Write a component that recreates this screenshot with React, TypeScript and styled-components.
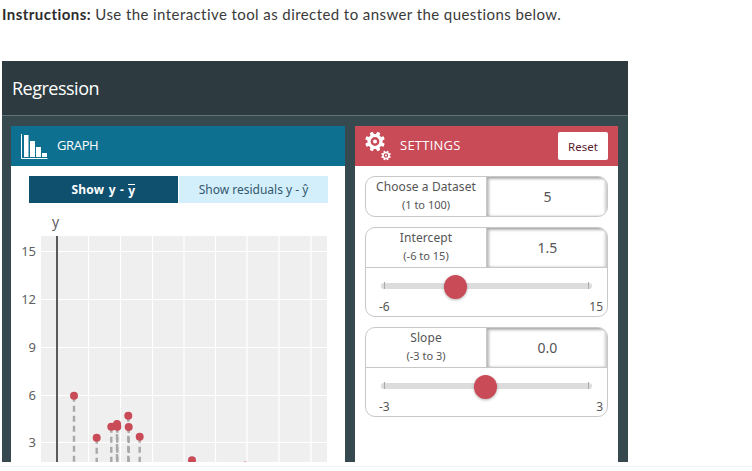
import React from "react";
import styled, { createGlobalStyle } from "styled-components";

const Global = createGlobalStyle`
  html, body { margin: 0; padding: 0; background: #fff; width: 752px; height: 471px; overflow: hidden; }
  * { box-sizing: border-box; }
`;

const Page = styled.div`
  width: 752px;
  height: 471px;
  overflow: hidden;
  display: flex;
  flex-direction: column;
  padding: 0 0 0 2px;
  font-family: "Open Sans", sans-serif;
`;

const Instructions = styled.p`
  margin: 0;
  height: 61px;
  padding-top: 4px;
  font: 15px/20px Lato, sans-serif;
  letter-spacing: 0.42px;
  color: #3a3a3a;
  b { font-weight: 700; color: #2d2d2d; letter-spacing: 0.45px; }
`;

const Panel = styled.section`
  width: 626px;
  height: 401px;
  flex: none;
  overflow: hidden;
  background: #36494e;
  display: flex;
  flex-direction: column;
`;

const PanelHeader = styled.header`
  height: 55px;
  flex: none;
  background: #2d3b40;
  border-bottom: 1px solid #5f7274;
  padding: 0 10px;
  display: flex;
  align-items: center;
  font-size: 18px;
  letter-spacing: -0.5px;
  color: #fff;
`;

const Columns = styled.div`
  flex: 1;
  min-height: 0;
  display: flex;
  gap: 10px;
  padding: 10px 10px 0 9px;
`;

const Card = styled.div<{ $w: number }>`
  width: ${(p) => p.$w}px;
  flex: none;
  background: #fff;
  display: flex;
  flex-direction: column;
  overflow: hidden;
`;

const CardHeader = styled.div<{ $bg: string }>`
  height: 40px;
  flex: none;
  background: ${(p) => p.$bg};
  color: #fff;
  display: flex;
  align-items: center;
  font-size: 13px;
`;

const CardTitle = styled.span<{ $track: number }>`
  letter-spacing: ${(p) => p.$track}px;
  padding-bottom: 2px;
`;

const IconSlot = styled.span<{ $w: number; $ml: number }>`
  width: ${(p) => p.$w}px;
  margin-left: ${(p) => p.$ml}px;
  display: flex;
  flex: none;
`;

const ResetButton = styled.button`
  margin-left: auto;
  margin-right: 10px;
  width: 50px;
  height: 28px;
  border: 0;
  border-radius: 2px;
  background: #fff;
  color: #5b2130;
  font: 11.5px "Noto Sans", sans-serif;
  padding: 0;
`;

const GraphBody = styled.div`
  padding: 10px 0 0 18px;
  display: flex;
  flex-direction: column;
`;

const Tabs = styled.div`
  display: flex;
  gap: 1px;
  width: 299px;
`;

const Tab = styled.div<{ $active?: boolean }>`
  flex: 1;
  height: 27px;
  display: flex;
  align-items: center;
  justify-content: center;
  white-space: pre;
  font: ${(p) => (p.$active ? 700 : 400)} 12px "Noto Sans", sans-serif;
  letter-spacing: ${(p) => (p.$active ? 0.2 : 0)}px;
  word-spacing: ${(p) => (p.$active ? 1 : 0)}px;
  background: ${(p) => (p.$active ? "#10506f" : "#d4effc")};
  color: ${(p) => (p.$active ? "#fff" : "#33586e")};
`;

const YBar = styled.span`
  display: inline-block;
  border-top: 1px solid currentColor;
  line-height: 11px;
  margin-top: 1px;
`;

const ChartBox = styled.div`
  margin-left: -18px;
  flex: none;
`;

const YLabel = styled.div`
  height: 27px;
  padding: 9px 0 0 41px;
  font: 14px/20px "Noto Sans", sans-serif;
  color: #5f5f5f;
`;

const PlotSvg = styled.svg`
  display: block;
`;

const SettingsBody = styled.div`
  padding: 10px 10px 0;
  display: flex;
  flex-direction: column;
  gap: 10px;
`;

const Control = styled.div`
  width: 243px;
  border: 1px solid #c8c8c8;
  border-radius: 10px;
  overflow: hidden;
  color: #555;
  font-family: "Noto Sans", sans-serif;
`;

const ControlTop = styled.div`
  height: 39px;
  display: flex;
`;

const ControlLabel = styled.div`
  width: 121px;
  flex: none;
  border-right: 1px solid #c8c8c8;
  padding-top: 1px;
  display: flex;
  flex-direction: column;
  align-items: center;
  font-size: 12px;
  line-height: 18px;
  letter-spacing: 0.1px;
  small { font-size: 11px; line-height: 18px; letter-spacing: 0; }
`;

const ValueBox = styled.div`
  flex: 1;
  display: flex;
  align-items: center;
  justify-content: center;
  padding-left: 1px;
  font-size: 14px;
  color: #555;
  box-shadow: inset 2px 2px 3px rgba(0, 0, 0, 0.28), inset -2px 0 3px rgba(0, 0, 0, 0.2);
`;

const SliderArea = styled.div`
  height: 49px;
  border-top: 1px solid #c8c8c8;
  padding: 15px 4px 0 13px;
  position: relative;
`;

const Track = styled.div`
  height: 6px;
  margin: 0 11px 0 2px;
  border-radius: 3px;
  background: #dcdcdc;
  position: relative;
`;

const Tick = styled.i<{ $side: "left" | "right" }>`
  position: absolute;
  top: -1px;
  ${(p) => p.$side}: 3px;
  width: 1px;
  height: 7px;
  background: #aaa;
`;

const Thumb = styled.div`
  position: absolute;
  top: 7px;
  width: 23px;
  height: 24px;
  border-radius: 50%;
  background: #c94b57;
  box-shadow: 0 1px 3px rgba(0, 0, 0, 0.3);
`;

const RangeLabels = styled.div`
  display: flex;
  justify-content: space-between;
  margin-top: 11px;
  font-size: 12px;
  line-height: 14px;
  color: #555;
`;

const FooterRule = styled.div`
  height: 1px;
  margin: 4px 0 0 -2px;
  width: 752px;
  flex: none;
  background: #f0f0f0;
`;

function BarsIcon() {
  return (
    <svg width="27" height="25" viewBox="0 0 27 25" fill="none">
      <path d="M0.5 0v24.5H26.5" stroke="#fff" strokeWidth="1" />
      <path d="M3 1h4.5v22H3zM9 7h5v16H9zM15 13h5v10h-5zM21 19h5v4h-5z" fill="#fff" />
    </svg>
  );
}

const gearPath = (cx: number, cy: number, r: number, teeth: number) => {
  const pts: string[] = [];
  const st = (Math.PI * 2) / teeth;
  const offset = st / 2;
  for (let i = 0; i < teeth; i++) {
    const a = i * st + offset;
    const rim = r * 0.76;
    const at = (o: number, rad: number) =>
      `${(cx + Math.cos(a + o * st) * rad).toFixed(2)} ${(cy + Math.sin(a + o * st) * rad).toFixed(2)}`;
    pts.push(`${i ? "L" : "M"}${at(-0.32, rim)}`, `L${at(-0.2, r)}`, `L${at(0.2, r)}`, `L${at(0.32, rim)}`);
  }
  const circle = (rad: number) =>
    `M${cx + rad} ${cy} A${rad} ${rad} 0 1 0 ${cx - rad} ${cy} A${rad} ${rad} 0 1 0 ${cx + rad} ${cy} Z`;
  return `${pts.join(" ")} Z ${circle(r * 0.44)} ${circle(r * 0.2)}`;
};

function GearsIcon() {
  return (
    <svg width="28" height="30" viewBox="0 0 28 30">
      <path d={gearPath(10, 10.5, 10, 8)} fill="#fff" fillRule="evenodd" />
      <path d={gearPath(21, 24.5, 5, 8)} fill="#fff" fillRule="evenodd" />
    </svg>
  );
}

const yTicks = [
  { label: "15", y: 21.5 },
  { label: "12", y: 69.5 },
  { label: "9", y: 117.5 },
  { label: "6", y: 165.5 },
  { label: "3", y: 212.5 },
];
const xGrid = [77.5, 109.5, 141.5, 173, 204.5, 236, 268, 300];
const points = [
  [63, 165.7],
  [85.7, 207.7],
  [100.3, 196.7],
  [106, 194],
  [106.3, 196.7],
  [117.3, 185.7],
  [117.7, 197],
  [128.7, 206.7],
  [181, 230.3],
  [234.3, 235.6],
];

function Plot() {
  return (
    <PlotSvg width="334" height="232" viewBox="0 0 334 232">
      <rect x="30" y="6" width="286" height="226" fill="#efefef" />
      {yTicks.map((t) => (
        <g key={t.label}>
          <line x1="30" x2="316" y1={t.y} y2={t.y} stroke="#fff" strokeWidth="1.2" />
          <text x="25" y={t.y + 4.5} textAnchor="end" fontSize="13" fill="#5f5f5f" fontFamily="'Noto Sans', sans-serif">
            {t.label}
          </text>
        </g>
      ))}
      {xGrid.map((x) => (
        <line key={x} x1={x} x2={x} y1="6" y2="232" stroke="#fff" strokeWidth="1.2" />
      ))}
      <line x1="46" x2="46" y1="6" y2="232" stroke="#5c5a58" strokeWidth="2" />
      {points.map(([x, y], i) => (
        <line key={`l${i}`} x1={x} x2={x} y1={y} y2="232" stroke="#a8a8a8" strokeWidth="2.4" strokeDasharray="6 4" />
      ))}
      {points.map(([x, y], i) => (
        <circle key={`c${i}`} cx={x} cy={y} r="4" fill="#c94b57" />
      ))}
    </PlotSvg>
  );
}

type SliderProps = { min: string; max: string; left: number };
function Slider({ min, max, left }: SliderProps) {
  return (
    <SliderArea>
      <Track>
        <Tick $side="left" />
        <Tick $side="right" />
      </Track>
      <Thumb style={{ left }} />
      <RangeLabels>
        <span>{min}</span>
        <span>{max}</span>
      </RangeLabels>
    </SliderArea>
  );
}

export default function App() {
  return (
    <Page>
      <Global />
      <Instructions>
        <b>Instructions:</b> Use the interactive tool as directed to answer the questions below.
      </Instructions>
      <Panel>
        <PanelHeader>Regression</PanelHeader>
        <Columns>
          <Card $w={334}>
            <CardHeader $bg="#0e7090">
              <IconSlot $w={36} $ml={10}>
                <BarsIcon />
              </IconSlot>
              <CardTitle $track={-0.35}>GRAPH</CardTitle>
            </CardHeader>
            <GraphBody>
              <Tabs>
                <Tab $active>
                  {"Show y - "}
                  <YBar>y</YBar>
                </Tab>
                <Tab>Show residuals y - ŷ</Tab>
              </Tabs>
              <ChartBox>
                <YLabel>y</YLabel>
                <Plot />
              </ChartBox>
            </GraphBody>
          </Card>
          <Card $w={263}>
            <CardHeader $bg="#c94b57">
              <IconSlot $w={35} $ml={10}>
                <GearsIcon />
              </IconSlot>
              <CardTitle $track={0.25}>SETTINGS</CardTitle>
              <ResetButton>Reset</ResetButton>
            </CardHeader>
            <SettingsBody>
              <Control>
                <ControlTop>
                  <ControlLabel>
                    Choose a Dataset
                    <small>(1 to 100)</small>
                  </ControlLabel>
                  <ValueBox>5</ValueBox>
                </ControlTop>
              </Control>
              <Control>
                <ControlTop>
                  <ControlLabel>
                    Intercept
                    <small>(-6 to 15)</small>
                  </ControlLabel>
                  <ValueBox>1.5</ValueBox>
                </ControlTop>
                <Slider min="-6" max="15" left={78} />
              </Control>
              <Control>
                <ControlTop>
                  <ControlLabel>
                    Slope
                    <small>(-3 to 3)</small>
                  </ControlLabel>
                  <ValueBox>0.0</ValueBox>
                </ControlTop>
                <Slider min="-3" max="3" left={108} />
              </Control>
            </SettingsBody>
          </Card>
        </Columns>
      </Panel>
      <FooterRule />
    </Page>
  );
}
